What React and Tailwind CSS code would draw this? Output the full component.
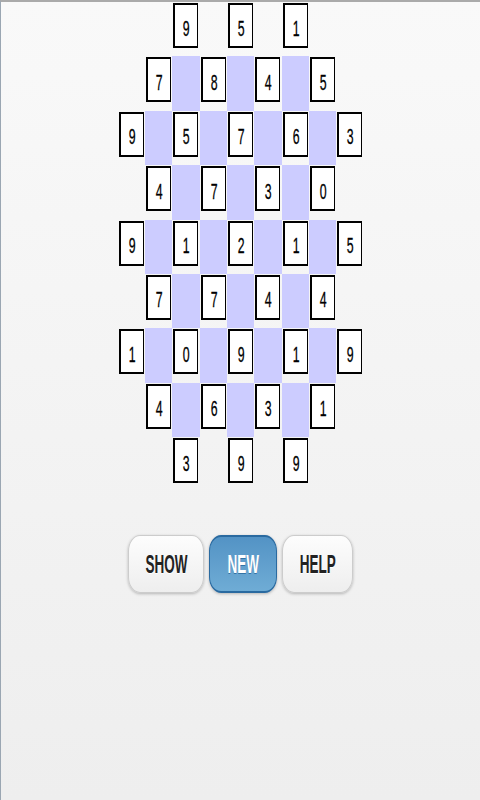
import React from "react";

const rows = [
  { start: 2, digits: [9, 5, 1], lav: [] },
  { start: 1, digits: [7, 8, 4, 5], lav: [2, 4, 6] },
  { start: 0, digits: [9, 5, 7, 6, 3], lav: [1, 3, 5, 7] },
  { start: 1, digits: [4, 7, 3, 0], lav: [2, 4, 6] },
  { start: 0, digits: [9, 1, 2, 1, 5], lav: [1, 3, 5, 7] },
  { start: 1, digits: [7, 7, 4, 4], lav: [2, 4, 6] },
  { start: 0, digits: [1, 0, 9, 1, 9], lav: [1, 3, 5, 7] },
  { start: 1, digits: [4, 6, 3, 1], lav: [2, 4, 6] },
  { start: 2, digits: [3, 9, 9], lav: [] },
];

function Cell({ kind, digit }) {
  if (kind === "lav") return <div className="bg-[#ccccff]" />;
  if (kind === "card")
    return (
      <div className="flex justify-center pt-[1px]">
        <div className="w-[25px] h-[45px] bg-white border-t-2 border-l-2 border-b-2 border-r border-black flex items-center justify-center pt-[6px]">
          <span
            className="inline-block scale-x-[0.56] text-[22px] leading-none text-black [-webkit-text-stroke:0.3px_black]"
            style={{ fontFamily: '"Liberation Sans", Arial, sans-serif' }}
          >
            {digit}
          </span>
        </div>
      </div>
    );
  return <div />;
}

function Btn({ label, active, w }) {
  return (
    <button
      className={
        "h-[58px] rounded-[12px/16px] flex items-center justify-center shadow-[0_1px_3px_rgba(0,0,0,0.25)] " +
        w +
        " " +
        (active
          ? "bg-linear-to-b from-[#5393c5] to-[#6facd5] border border-[#2a6aa0] border-t-2 border-b-2 text-white [text-shadow:0_1px_0_#3373a5]"
          : "bg-linear-to-b from-[#fdfdfd] to-[#eeeeee] border border-[#cccccc] text-[#222222] [text-shadow:0_1px_0_#ffffff]")
      }
    >
      <span
        className="inline-block scale-x-[0.52] text-[26px] font-bold leading-none"
        style={{ fontFamily: '"Liberation Sans", Arial, sans-serif' }}
      >
        {label}
      </span>
    </button>
  );
}

export default function App() {
  const cells = [];
  rows.forEach((r, ri) => {
    for (let c = 0; c < 9; c++) {
      let kind = "empty";
      let digit = null;
      const di = (c - r.start) / 2;
      if (c >= r.start && (c - r.start) % 2 === 0 && di < r.digits.length) {
        kind = "card";
        digit = r.digits[di];
      } else if (r.lav.includes(c)) {
        kind = "lav";
      }
      cells.push(<Cell key={ri + "-" + c} kind={kind} digit={digit} />);
    }
  });

  return (
    <div className="w-[480px] h-[800px] overflow-hidden bg-linear-to-b from-[#f9f9f9] to-[#eeeeee] border-t-2 border-t-[#aaaaaa] border-l border-l-[#9aa6b2]">
      <div className="mx-auto w-[246px] grid grid-cols-9 auto-rows-[54.375px]">
        {cells}
      </div>
      <div className="mt-[44px] flex justify-center gap-[5px]">
        <Btn label="SHOW" w="w-[76px]" />
        <Btn label="NEW" w="w-[68px]" active />
        <Btn label="HELP" w="w-[71px]" />
      </div>
    </div>
  );
}
